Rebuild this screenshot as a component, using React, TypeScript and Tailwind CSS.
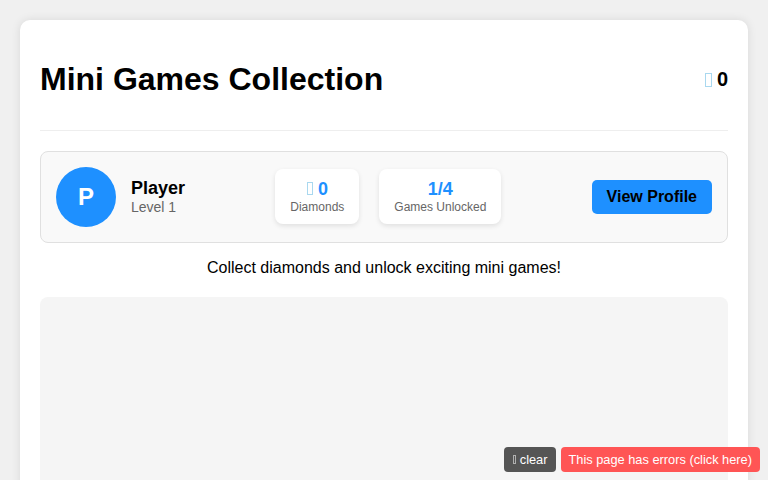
function MissingGlyph({ className }: { className: string }) {
  return <span aria-hidden="true" className={`inline-block border ${className}`} />;
}

export default function App() {
  return (
    <div className="h-screen overflow-hidden bg-[#f0f0f0] p-5 font-['Liberation_Sans',Arial,sans-serif] leading-[normal] text-black">
      <div className="rounded-[10px] bg-white p-5 shadow-[0_0_10px_rgba(0,0,0,0.1)]">

        {/* header */}
        <header className="flex items-center justify-between border-b border-[#eeeeee] pb-2.5">
          <h1 className="my-[21.44px] text-[32px] font-bold">Mini Games Collection</h1>
          <div className="flex items-center gap-[5px] text-[20px] font-bold">
            <MissingGlyph className="h-[14px] w-[7px] border-[#a9d8ef]" />
            <span>0</span>
          </div>
        </header>

        {/* profile bar */}
        <section className="mt-5 flex items-center justify-between rounded-lg border border-[#e0e0e0] bg-[#f9f9f9] p-[15px]">
          <div className="flex items-center gap-[15px]">
            <div className="flex h-[60px] w-[60px] items-center justify-center rounded-full bg-[#1e90ff] text-[24px] font-bold text-white">P</div>
            <div>
              <div className="text-[18px] font-bold">Player</div>
              <div className="text-[14px] text-[#666666]">Level 1</div>
            </div>
          </div>
          <div className="flex gap-5">
            <div className="rounded-lg bg-white px-[15px] py-2.5 text-center shadow-[0_2px_5px_rgba(0,0,0,0.1)]">
              <div className="text-[18px] font-bold text-[#1e90ff]">
                <MissingGlyph className="mr-[0.5px] h-[13px] w-[6px] border-[#a9d8ef]" /> 0
              </div>
              <div className="text-[12px] text-[#666666]">Diamonds</div>
            </div>
            <div className="rounded-lg bg-white px-[15px] py-2.5 text-center shadow-[0_2px_5px_rgba(0,0,0,0.1)]">
              <div className="text-[18px] font-bold text-[#1e90ff]">1/4</div>
              <div className="text-[12px] text-[#666666]">Games Unlocked</div>
            </div>
          </div>
          <button className="rounded-[5px] bg-[#1e90ff] px-[15px] py-2 text-[16px] font-bold">View Profile</button>
        </section>

        <p className="my-4 text-center text-[16px]">Collect diamonds and unlock exciting mini games!</p>

        {/* game area */}
        <div className="mt-5 h-[400px] rounded-lg bg-[#f5f5f5]" />
      </div>

      {/* error overlay buttons */}
      <div className="fixed bottom-2 right-2 flex gap-[5px] text-[12.8px] text-white">
        <button className="rounded bg-[#555555] px-2 py-[5px]">
          <MissingGlyph className="ml-px h-[9px] w-[3px] border-[#b0b0b0]" /> clear
        </button>
        <button className="rounded bg-[#ff5555] px-2 py-[5px]">This page has errors (click here)</button>
      </div>
    </div>
  );
}
